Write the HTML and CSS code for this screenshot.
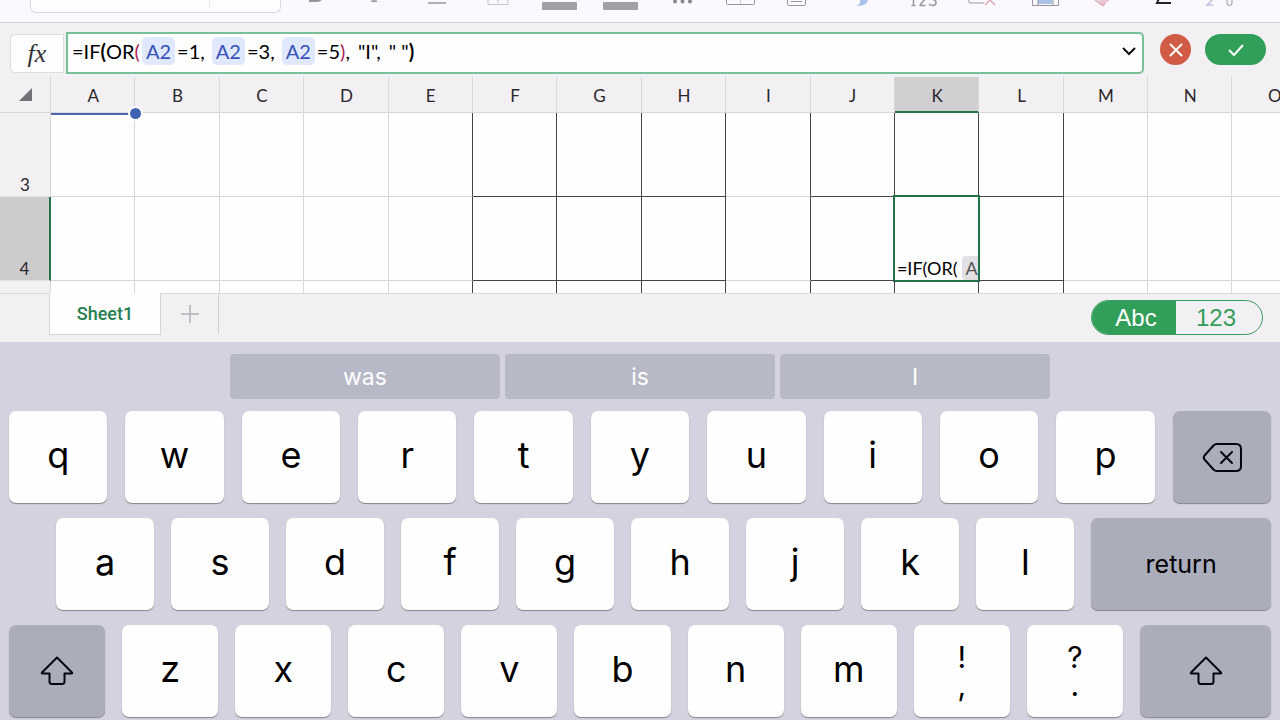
FILE: index.html
```html
<!DOCTYPE html>
<html lang="en">
<head>
<meta charset="utf-8">
<meta name="viewport" content="width=device-width, initial-scale=1">
<title>Sheet1</title>
<link rel="stylesheet" href="styles.css">
</head>
<body>
<header class="toolbar">
  <div class="font-box"><span class="font-split"></span></div>
  <div class="tools">
    <button class="tool" aria-label="Bold"><svg viewBox="0 0 40 22"><path d="M11 .5h7.500q4 0 4.500-2.500" stroke-width="3"/></svg></button>
    <button class="tool" aria-label="Italic"><svg viewBox="0 0 40 22"><path d="M13 1.200h6M16.500 0v1" stroke-width="1.5"/></svg></button>
    <button class="tool" aria-label="Underline"><svg viewBox="0 0 40 22"><path d="M9 3h18" stroke-width="1.5"/></svg></button>
    <button class="tool" aria-label="Borders"><svg viewBox="0 0 40 22"><path d="M9 0v4.500h20V0M19 0v4" stroke-width="1" stroke-dasharray="1 1"/></svg></button>
    <button class="tool" aria-label="Fill colour"><svg viewBox="0 0 40 22"><rect class="swatch" x="3" y="2" width="35" height="8" rx="1"/></svg></button>
    <button class="tool" aria-label="Font colour"><svg viewBox="0 0 40 22"><rect class="swatch" x="4" y="2" width="35" height="8" rx="1"/></svg></button>
    <button class="tool" aria-label="More"><svg viewBox="0 0 40 22"><g class="dots"><circle cx="15" cy="1.500" r="2"/><circle cx="22.500" cy="1.500" r="2"/><circle cx="30" cy="1.500" r="2"/></g></svg></button>
    <button class="tool" aria-label="Merge cells"><svg viewBox="0 0 40 22"><path d="M6.500-2v5.500q0 1 1 1h26q1 0 1-1V-2"/><path d="M20.500 0v4" stroke-width=".5"/></svg></button>
    <button class="tool" aria-label="Wrap text"><svg viewBox="0 0 40 22"><path d="M7.500-2v6.500q0 1 1 1h16q1 0 1-1V-2M11 1.500h11"/></svg></button>
    <button class="tool" aria-label="Format painter"><svg viewBox="0 0 40 22"><path class="paint" d="M20 0h8q-1 6-12 6 5-2 4-6z"/></svg></button>
    <button class="tool" aria-label="Number format"><svg viewBox="0 0 40 22"><path d="M12.500-5V5.500M10.500 5.500h4M18.500 5.500h6M19 5l5-6M28 4q2 2 4.500 1.500Q35 5 35 2.500T32-.5" stroke-width="1.5"/></svg></button>
    <button class="tool" aria-label="Delete cells"><svg viewBox="0 0 40 22"><path d="M8-2v4q0 1 1 1h14"/><path class="rose" d="M24 5L34-5M34 5L24-5"/></svg></button>
    <button class="tool" aria-label="Cell styles"><svg viewBox="0 0 40 22"><path class="paint" d="M17 0h14v4H17z"/><path d="M11.500-2v7.500h26V-2M17 0v5M32 0v5"/></svg></button>
    <button class="tool" aria-label="Clear"><svg viewBox="0 0 40 22"><path class="eraser" d="M17 0l5 5.500L29 0z"/><path class="rose" d="M14 0l8 5.500 2-2"/></svg></button>
    <button class="tool" aria-label="Sum"><svg viewBox="0 0 40 22"><path class="ink" d="M18-4l-3 7h14"/></svg></button>
    <button class="tool" aria-label="Sort"><svg viewBox="0 0 40 22"><path class="violet" d="M13-3L5 5h6.500"/><path d="M25-2v5q0 2.500 2.500 2.500T30 3v-5"/></svg></button>
  </div>
</header>

<section class="formula-bar">
  <button class="fx" aria-label="Insert function"><i>fx</i></button>
  <div class="field">
    <div class="formula" role="textbox" contenteditable="true" spellcheck="false" aria-label="Formula">=IF<b>(</b>OR<span class="paren">(</span><span class="ref">A2</span>=1,<span class="ref next">A2</span>=3,<span class="ref next">A2</span>=5<span class="paren">)</span>,<span class="arg">"I",</span><span class="arg">" "</span><b>)</b></div>
    <button class="expand" aria-label="Expand formula bar"><svg viewBox="0 0 16 10"><path d="M2 2l6 6 6-6"/></svg></button>
  </div>
  <button class="round cancel" aria-label="Cancel"><svg viewBox="0 0 16 16"><path d="M2 2l12 12M14 2L2 14"/></svg></button>
  <button class="round accept" aria-label="Enter"><svg viewBox="0 0 18 14"><path d="M2 7l5 5L16 2"/></svg></button>
</section>

<main class="sheet">
  <table class="grid">
    <thead>
      <tr>
        <th class="corner" scope="col" aria-label="Select all"><svg viewBox="0 0 13 13"><path d="M13 0v13H0z"/></svg></th>
        <th scope="col">A</th><th scope="col">B</th><th scope="col">C</th><th scope="col">D</th><th scope="col">E</th><th scope="col">F</th><th scope="col">G</th><th scope="col">H</th><th scope="col">I</th><th scope="col">J</th><th scope="col" class="current">K</th><th scope="col">L</th><th scope="col">M</th><th scope="col">N</th><th scope="col">O</th>
      </tr>
    </thead>
    <tbody>
      <tr>
        <th scope="row">3</th>
        <td class="marked"><span class="mark-line"></span><span class="mark-dot"></span></td><td></td><td></td><td></td><td class="edge"></td><td class="boxed"></td><td class="boxed"></td><td class="boxed"></td><td class="edge"></td><td class="boxed"></td><td class="boxed"></td><td class="boxed"></td><td></td><td></td><td></td>
      </tr>
      <tr>
        <th scope="row" class="current">4</th>
        <td></td><td></td><td></td><td></td><td class="edge"></td><td class="boxed"></td><td class="boxed"></td><td class="boxed"></td><td class="edge"></td><td class="boxed"></td><td class="boxed active"><div class="editor">=IF(OR(<span class="cell-ref">A</span></div></td><td class="boxed"></td><td></td><td></td><td></td>
      </tr>
      <tr>
        <th scope="row" aria-label="5"></th>
        <td></td><td></td><td></td><td></td><td class="edge"></td><td class="boxed"></td><td class="boxed"></td><td class="boxed"></td><td class="edge"></td><td class="boxed"></td><td class="boxed"></td><td class="boxed"></td><td></td><td></td><td></td>
      </tr>
    </tbody>
  </table>
</main>

<nav class="tabs">
  <button class="tab">Sheet1</button>
  <button class="add" aria-label="Add sheet"><svg viewBox="0 0 18 18"><path d="M9 0v18M0 9h18"/></svg></button>
  <div class="mode">
    <button class="mode-item on">Abc</button>
    <button class="mode-item">123</button>
  </div>
</nav>

<section class="keyboard">
  <div class="suggestions">
    <button>was</button><button>is</button><button>I</button>
  </div>
  <div class="row">
    <button class="key">q</button><button class="key">w</button><button class="key">e</button><button class="key">r</button><button class="key">t</button><button class="key">y</button><button class="key">u</button><button class="key">i</button><button class="key">o</button><button class="key">p</button>
    <button class="key dark" aria-label="Delete"><svg class="erase" viewBox="0 0 42 32"><path d="M16 3h19q5 0 5 5v17q0 5-5 5H16q-2 0-3.500-1.500L3.500 18.500q-1.500-2 0-4L12.500 4.500Q14 3 16 3z"/><path d="M20 11l11 11M31 11L20 22"/></svg></button>
  </div>
  <div class="row second">
    <button class="key">a</button><button class="key">s</button><button class="key">d</button><button class="key">f</button><button class="key">g</button><button class="key">h</button><button class="key">j</button><button class="key">k</button><button class="key">l</button>
    <button class="key dark return">return</button>
  </div>
  <div class="row third">
    <button class="key dark" aria-label="Shift"><svg class="shift" viewBox="0 0 34 30"><path d="M17 1.500L32 16.500q.8 1-.5 1H24.500v8q0 2.500-2.500 2.500H12q-2.500 0-2.500-2.500v-8H2.500q-1.300 0-.5-1z"/></svg></button>
    <button class="key">z</button><button class="key">x</button><button class="key">c</button><button class="key">v</button><button class="key">b</button><button class="key">n</button><button class="key">m</button>
    <button class="key double"><span>!</span><span>,</span></button>
    <button class="key double"><span>?</span><span>.</span></button>
    <button class="key dark wide" aria-label="Shift"><svg class="shift" viewBox="0 0 34 30"><path d="M17 1.500L32 16.500q.8 1-.5 1H24.500v8q0 2.500-2.500 2.500H12q-2.500 0-2.500-2.500v-8H2.500q-1.300 0-.5-1z"/></svg></button>
  </div>
</section>
</body>
</html>
```
FILE: styles.css
```css
* { box-sizing: border-box; }

body {
  margin: 0;
  height: 100vh;
  display: flex;
  flex-direction: column;
  overflow: hidden;
  background: #f3f0f4;
  font-family: Lato, "Open Sans", sans-serif;
  color: #000;
}

button {
  margin: 0;
  padding: 0;
  border: 0;
  background: none;
  color: inherit;
  font: inherit;
}

svg { display: block; fill: none; }

/* Toolbar */
.toolbar {
  display: flex;
  flex: none;
  height: 23px;
  padding: 0 28px 0 30px;
  gap: 7px;
  overflow: hidden;
  background: #fcf9fe;
  border-bottom: 1px solid #d3d0d7;
}
.font-box {
  width: 251px;
  height: 13px;
  display: flex;
  justify-content: flex-end;
  padding-right: 70px;
  background: #fefcff;
  border: 1px solid #dcd9df;
  border-top: 0;
  border-radius: 0 0 6px 6px;
}
.font-split { width: 1px; height: 8px; background: #ebe8ee; }
.tools { display: flex; flex: 1; }
.tool { flex: 1; display: flex; justify-content: center; }
.tool svg { width: 40px; height: 22px; stroke: #98959b; }
.tool .swatch { fill: #a29fa5; stroke: none; }
.tool .dots { fill: #89868c; stroke: none; }
.tool .paint { fill: #a9c2e8; stroke: none; }
.tool .rose { stroke: #dca6b4; stroke-width: 1.5; }
.tool .eraser { fill: #eac6d0; stroke: none; }
.tool .ink { stroke: #222; stroke-width: 2; }
.tool .violet { stroke: #c3bce3; stroke-width: 1.5; }

/* Formula bar */
.formula-bar {
  display: flex;
  flex: none;
  align-items: flex-start;
  height: 54px;
  padding: 9px 14px 0 10px;
}
.fx {
  width: 54px;
  height: 39px;
  margin: 2px 2px 0 0;
  background: #fdfcfe;
  border: 1px solid #dfdce1;
  border-radius: 5px 0 0 5px;
  font: 26px/32px "Liberation Serif", serif;
  color: #333;
}
.field {
  flex: 1;
  display: flex;
  align-items: center;
  height: 42px;
  padding: 0 5px 4px 4px;
  background: #fefefe;
  border: 2px solid #78bf98;
  border-radius: 0 5px 5px 0;
}
.formula {
  flex: 1;
  font-size: 20px;
  line-height: 28px;
  white-space: pre;
  outline: none;
}
.paren { color: #ad1f5b; }
.ref {
  display: inline-block;
  margin: 0 2px;
  padding: 0 4px;
  border-radius: 5px;
  background: #dfe8fc;
  color: #3551b5;
}
.ref.next { margin-left: 7px; }
.arg { margin-left: 8px; }
.expand svg { width: 16px; height: 10px; stroke: #111; stroke-width: 2; }
.round {
  display: flex;
  align-items: center;
  justify-content: center;
  height: 31px;
  margin-top: 2px;
  border-radius: 16px;
}
.round svg { stroke: #fff; stroke-width: 2; }
.cancel { width: 31px; margin-left: 16px; background: #d25b46; }
.cancel svg { width: 16px; height: 16px; }
.accept { width: 61px; margin-left: 14px; background: #319e59; }
.accept svg { width: 18px; height: 14px; }

/* Spreadsheet */
.sheet { flex: 1 1 0; min-height: 0; overflow: hidden; background: #fefefe; }
.grid {
  width: calc(100% + 37px);
  table-layout: fixed;
  border-collapse: separate;
  border-spacing: 0;
}
.grid th, .grid td {
  position: relative;
  height: 84px;
  padding: 0;
  border-right: 1px solid #d8d6da;
  border-bottom: 1px solid #d8d6da;
}
.grid th { background: #f3f0f4; font-size: 17px; font-weight: 400; line-height: 22px; color: #29272b; }
.grid thead th { height: 36px; padding: 2px 0 0 1px; }
.grid thead .corner { width: 51px; padding: 0; }
.corner svg { width: 13px; height: 13px; margin-left: 19px; fill: #747176; }
.grid tbody th { vertical-align: bottom; border-bottom-color: #e4e1e6; }
.grid thead .current { padding-top: 3px; background: #d2cfd3; border-bottom: 2px solid #26744b; }
.grid tbody .current { background: #cecbcf; border-right: 2px solid #217346; }
.grid .edge { border-right-color: #454346; }
.grid .boxed { border-right-color: #454346; border-bottom-color: #454346; }
.mark-line { position: absolute; top: 0; left: 0; width: 79px; height: 2px; background: #4a68b2; }
.mark-dot {
  position: absolute;
  top: -7px;
  right: -9px;
  z-index: 1;
  width: 15px;
  height: 15px;
  border: 2px solid #fefefe;
  border-radius: 50%;
  background: #3f62b3;
}
.editor {
  position: absolute;
  inset: -2px;
  display: flex;
  align-items: flex-end;
  overflow: hidden;
  padding-left: 2px;
  border: 2px solid #217346;
  background: #fefefe;
  font-size: 18px;
  line-height: 24px;
}
.cell-ref { flex: 1; margin-left: 4px; padding-left: 4px; border-radius: 4px 0 0 4px; background: #e2e0e4; color: #555; }

/* Sheet tabs */
.tabs {
  display: flex;
  flex: none;
  align-items: flex-start;
  height: 49px;
  padding: 0 17px 0 49px;
  border-top: 1px solid #dcd9df;
  background: #f3f0f4;
}
.tab {
  width: 112px;
  height: 42px;
  margin-top: -1px;
  background: #fefefe;
  border: 1px solid #d8d5da;
  border-top: 0;
  font: 500 18px/40px Roboto, sans-serif;
  color: #26804f;
}
.add {
  display: flex;
  align-items: center;
  justify-content: center;
  width: 58px;
  height: 40px;
  border-right: 1px solid #d3d0d5;
}
.add svg { width: 18px; height: 18px; stroke: #b3b0b5; stroke-width: 1.5; }
.mode {
  display: flex;
  width: 172px;
  height: 35px;
  margin: 6px 0 0 auto;
  overflow: hidden;
  border: 1px solid #319e59;
  border-radius: 18px;
}
.mode-item { flex: 1; font: 24px/33px "Liberation Sans", sans-serif; color: #319e59; padding-right: 6px; }
.mode-item.on { background: #319e59; color: #fff; padding: 0 0 0 4px; }

/* On-screen keyboard */
.keyboard {
  display: flex;
  flex: none;
  flex-direction: column;
  gap: 15px;
  padding: 12px 9px 3px;
  background: #d5d2df;
  font-family: Inter, sans-serif;
}
.suggestions {
  display: grid;
  grid-template-columns: repeat(3, 1fr);
  gap: 5px;
  width: 65%;
  height: 45px;
  margin: 0 auto -3px;
}
.suggestions button { border-radius: 4px; background: #b7b9c7; color: #fff; font-size: 23px; }
.row { display: flex; gap: 18px; }
.row.second { gap: 17px; padding-left: 47px; }
.row.third { gap: 17px; }
.key {
  flex: 96 1 0;
  min-width: 0;
  height: 92px;
  display: flex;
  align-items: center;
  justify-content: center;
  padding-bottom: 4px;
  border-radius: 7px;
  background: #fefefe;
  box-shadow: 0 1px 1px #85838c;
  font-size: 36px;
}
.key.dark { padding-bottom: 0; background: #abadbb; }
.key.return { flex-grow: 176; font-size: 25px; }
.key.wide { flex-grow: 131; }
.key.double { flex-direction: column; padding-bottom: 0; font-size: 30px; line-height: 28px; }
.key svg { stroke: #05070f; stroke-width: 2; stroke-linejoin: round; stroke-linecap: round; }
.erase { width: 42px; height: 32px; }
.shift { width: 34px; height: 30px; }
```
